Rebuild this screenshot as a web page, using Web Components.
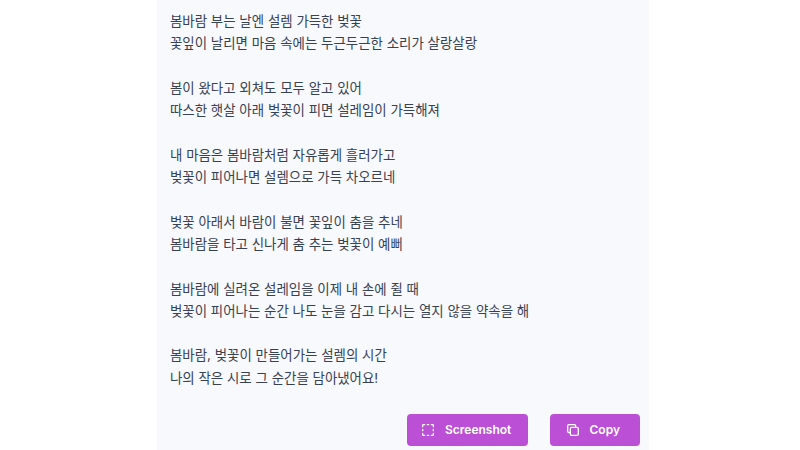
<!DOCTYPE html>
<html lang="ko">
<head>
<meta charset="utf-8">
<title>Lyrics</title>
<style>
  html, body { margin: 0; height: 100%; background: #fff; overflow: hidden; }
  body { font-family: Inter, "Noto Sans CJK KR", sans-serif; }
</style>
</head>
<body>
<lyrics-card>
  <lyric-text>봄바람 부는 날엔 설렘 가득한 벚꽃
꽃잎이 날리면 마음 속에는 두근두근한 소리가 살랑살랑

봄이 왔다고 외쳐도 모두 알고 있어
따스한 햇살 아래 벚꽃이 피면 설레임이 가득해져

내 마음은 봄바람처럼 자유롭게 흘러가고
벚꽃이 피어나면 설렘으로 가득 차오르네

벚꽃 아래서 바람이 불면 꽃잎이 춤을 추네
봄바람을 타고 신나게 춤 추는 벚꽃이 예뻐

봄바람에 실려온 설레임을 이제 내 손에 쥘 때
벚꽃이 피어나는 순간 나도 눈을 감고 다시는 열지 않을 약속을 해

봄바람, 벚꽃이 만들어가는 설렘의 시간
나의 작은 시로 그 순간을 담아냈어요!</lyric-text>
  <action-button slot="actions" icon="screenshot" style="--w:121px;--pl:13px">Screenshot</action-button>
  <action-button slot="actions" icon="copy" style="--w:90px;--pl:14.5px">Copy</action-button>
</lyrics-card>
<script>
class LyricsCard extends HTMLElement {
  connectedCallback() {
    this.attachShadow({ mode: 'open' });
    this.shadowRoot.innerHTML = `
      <style>
        :host {
          display: block;
          width: 492px;
          height: 450px;
          margin-left: 157px;
          background: #f8f9fd;
          box-sizing: border-box;
          padding: 10px 9px 0 13px;
        }
        .actions {
          display: flex;
          justify-content: flex-end;
          gap: 22px;
          margin-top: 24.9px;
        }
      </style>
      <slot></slot>
      <div class="actions"><slot name="actions"></slot></div>
    `;
  }
}

class LyricText extends HTMLElement {
  connectedCallback() {
    this.attachShadow({ mode: 'open' });
    this.shadowRoot.innerHTML = `
      <style>
        :host { display: block; }
        .lines {
          white-space: pre-wrap;
          font: 13.45px/22.3px Inter, "Noto Sans CJK KR", sans-serif;
          color: #374151;
        }
      </style>
      <div class="lines"><slot></slot></div>
    `;
  }
}

const ICONS = {
  screenshot: '<path d="M4 7V5a1 1 0 0 1 1-1h2M11 4h2M17 4h2a1 1 0 0 1 1 1v2M20 11v2M20 17v2a1 1 0 0 1-1 1h-2M13 20h-2M7 20H5a1 1 0 0 1-1-1v-2M4 13v-2"/>',
  copy: '<rect x="8" y="8" width="12" height="12" rx="2"/><path d="M16 8V6a2 2 0 0 0-2-2H6a2 2 0 0 0-2 2v8a2 2 0 0 0 2 2h2"/>'
};

class ActionButton extends HTMLElement {
  connectedCallback() {
    this.attachShadow({ mode: 'open' });
    this.shadowRoot.innerHTML = `
      <style>
        :host { display: block; }
        button {
          display: flex;
          align-items: center;
          gap: 9px;
          box-sizing: border-box;
          width: var(--w);
          height: 32px;
          border: 0;
          padding: 0 0 0 var(--pl);
          border-radius: 4px;
          background: #bb4fd6;
          color: #fff;
          font: 600 12px Inter, sans-serif;
        }
        svg { width: 16px; height: 16px; fill: none; stroke: currentColor; stroke-width: 2; stroke-linecap: round; stroke-linejoin: round; }
      </style>
      <button><svg viewBox="0 0 24 24">${ICONS[this.getAttribute('icon')]}</svg><slot></slot></button>
    `;
  }
}

customElements.define('lyrics-card', LyricsCard);
customElements.define('lyric-text', LyricText);
customElements.define('action-button', ActionButton);
</script>
</body>
</html>
